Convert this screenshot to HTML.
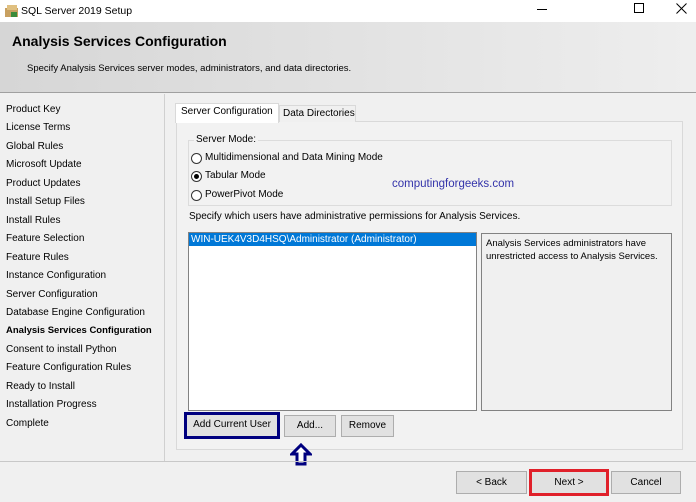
<!DOCTYPE html>
<html><head><style>
*{margin:0;padding:0;box-sizing:border-box}
body{width:696px;height:502px;background:#f0f0f0;font-family:"Liberation Sans",sans-serif;font-size:10px;color:#000;position:relative;overflow:hidden}
.a{position:absolute;white-space:nowrap}
.btn{position:absolute;background:#e1e1e1;border:1px solid #adadad;text-align:center;font-size:10px;line-height:19px}
.nav{position:absolute;left:6px;font-size:10px}
.rad{position:absolute;width:11px;height:11px;border:1px solid #333;border-radius:50%;background:#fff}
.t{font-size:10px}
</style></head><body>
<div class="a" style="left:0;top:0;width:696px;height:24px;background:#fff"></div>
<svg class="a" style="left:4px;top:3px" width="16" height="16"><rect x="1" y="5" width="13" height="9" fill="#c8a060"/><rect x="3" y="2" width="10" height="5" fill="#e0c080"/><rect x="7" y="9" width="6" height="5" fill="#3a8a3a"/></svg>
<div class="a" style="left:21px;top:5px;font-size:10.5px">SQL Server 2019 Setup</div>
<div class="a" style="left:537px;top:9px;width:10px;height:1px;background:#000"></div>
<div class="a" style="left:634px;top:3px;width:10px;height:10px;border:1px solid #000"></div>
<svg class="a" style="left:676px;top:3px" width="11" height="11"><path d="M0.5 0.5L10.5 10.5M10.5 0.5L0.5 10.5" stroke="#000" stroke-width="1"/></svg>
<div class="a" style="left:0;top:22px;width:696px;height:71px;background:linear-gradient(90deg,#d6d6d6,#eeeeee);border-bottom:1px solid #a0a0a0"></div>
<div class="a" style="left:12px;top:33px;font-size:14px;font-weight:bold">Analysis Services Configuration</div>
<div class="a" style="left:27px;top:63px;font-size:9.5px">Specify Analysis Services server modes, administrators, and data directories.</div>
<div class="a" style="left:164px;top:94px;width:1px;height:368px;background:#d0d0d0"></div>
<div class="nav" style="top:104px">Product Key</div>
<div class="nav" style="top:122px">License Terms</div>
<div class="nav" style="top:141px">Global Rules</div>
<div class="nav" style="top:159px">Microsoft Update</div>
<div class="nav" style="top:178px">Product Updates</div>
<div class="nav" style="top:196px">Install Setup Files</div>
<div class="nav" style="top:215px">Install Rules</div>
<div class="nav" style="top:233px">Feature Selection</div>
<div class="nav" style="top:252px">Feature Rules</div>
<div class="nav" style="top:270px">Instance Configuration</div>
<div class="nav" style="top:289px">Server Configuration</div>
<div class="nav" style="top:307px">Database Engine Configuration</div>
<div class="nav" style="top:325px;font-weight:bold;font-size:9.5px">Analysis Services Configuration</div>
<div class="nav" style="top:344px">Consent to install Python</div>
<div class="nav" style="top:362px">Feature Configuration Rules</div>
<div class="nav" style="top:381px">Ready to Install</div>
<div class="nav" style="top:399px">Installation Progress</div>
<div class="nav" style="top:418px">Complete</div>
<div class="a" style="left:176px;top:121px;width:507px;height:329px;border:1px solid #d9d9d9;background:#f2f2f2"></div>
<div class="a" style="left:279px;top:105px;width:77px;height:17px;border:1px solid #d9d9d9;border-bottom:none;background:#f0f0f0"></div>
<div class="a t" style="left:283px;top:108px">Data Directories</div>
<div class="a" style="left:175px;top:103px;width:104px;height:20px;border:1px solid #d9d9d9;border-bottom:none;background:#fff"></div>
<div class="a t" style="left:181px;top:106px">Server Configuration</div>
<div class="a" style="left:188px;top:140px;width:484px;height:66px;border:1px solid #dcdcdc"></div>
<div class="a t" style="left:194px;top:134px;background:#f2f2f2;padding:0 2px">Server Mode:</div>
<div class="rad" style="left:191px;top:153px"></div>
<div class="a t" style="left:205px;top:152px">Multidimensional and Data Mining Mode</div>
<div class="rad" style="left:191px;top:171px"></div><div class="a" style="left:194px;top:174px;width:5px;height:5px;border-radius:50%;background:#000"></div>
<div class="a t" style="left:205px;top:170px">Tabular Mode</div>
<div class="rad" style="left:191px;top:190px"></div>
<div class="a t" style="left:205px;top:189px">PowerPivot Mode</div>
<div class="a" style="left:392px;top:178px;font-size:11.5px;color:#3333aa">computingforgeeks.com</div>
<div class="a t" style="left:189px;top:211px">Specify which users have administrative permissions for Analysis Services.</div>
<div class="a" style="left:188px;top:232px;width:289px;height:179px;border:1px solid #828282;background:#fff"></div>
<div class="a" style="left:189px;top:233px;width:287px;height:13px;background:#0078d7;color:#fff;font-size:10px;padding-left:2px;line-height:13px">WIN-UEK4V3D4HSQ\Administrator (Administrator)</div>
<div class="a" style="left:481px;top:233px;width:191px;height:178px;border:1px solid #828282;background:#f0f0f0"></div>
<div class="a" style="left:486px;top:237px;font-size:9.5px;line-height:13px">Analysis Services administrators have<br>unrestricted access to Analysis Services.</div>
<div class="btn" style="left:184px;top:412px;width:96px;height:27px;border:3px solid #00007f;line-height:20px">Add Current User</div>
<div class="btn" style="left:284px;top:415px;width:52px;height:22px">Add...</div>
<div class="btn" style="left:341px;top:415px;width:53px;height:22px">Remove</div>
<svg class="a" style="left:290px;top:443px" width="22" height="24"><path d="M11 2 L20 11 L15 11 L15 21 L7 21 L7 11 L2 11 Z" fill="#fff" stroke="#00007f" stroke-width="3" stroke-linejoin="miter"/></svg>
<div class="a" style="left:0;top:461px;width:696px;height:1px;background:#c8c8c8"></div>
<div class="btn" style="left:456px;top:471px;width:71px;height:23px;line-height:21px">&lt; Back</div>
<div class="btn" style="left:529px;top:469px;width:80px;height:27px;border:3px solid #e0202a;line-height:21px">Next &gt;</div>
<div class="btn" style="left:611px;top:471px;width:70px;height:23px;line-height:21px">Cancel</div>
</body></html>
